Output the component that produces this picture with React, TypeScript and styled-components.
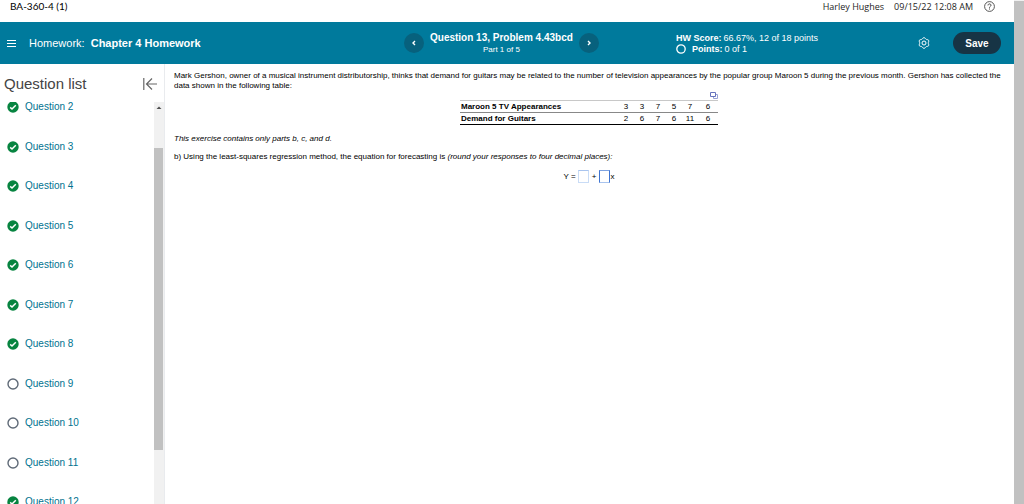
import React from 'react';
import styled, { createGlobalStyle } from 'styled-components';

const GlobalStyle = createGlobalStyle`
  *, *::before, *::after { box-sizing: border-box; }
  body {
    margin: 0;
    background: #fff;
    color: #000;
    font-family: "Liberation Sans", Arial, sans-serif;
  }
  button, input { font: inherit; }
`;

const Page = styled.div`
  display: flex;
  height: 100vh;
  overflow: hidden;
`;

const Column = styled.div`
  display: flex;
  flex: 1;
  flex-direction: column;
  min-width: 0;
`;

const PageScrollbar = styled.div`
  width: 10px;
  background: #c1c1c1;
  border-top: 1px solid #f0f0f0;
`;

const TopBar = styled.div`
  display: flex;
  align-items: center;
  height: 22px;
  padding: 0 19px 9px 10px;
  color: #252525;
  font: 9px/13px "Open Sans", sans-serif;
`;

const Course = styled.span`
  flex: 1;
  color: #000;
  font-family: Lato, sans-serif;
  font-size: 10px;
`;

const UserName = styled.span`
  margin-right: 10px;
`;

const IconButton = styled.button`
  display: flex;
  align-items: center;
  justify-content: center;
  flex: none;
  padding: 0;
  border: 0;
  background: none;
  color: inherit;
`;

const HelpButton = styled(IconButton)`
  margin-left: 11px;
`;

const Banner = styled.header`
  display: grid;
  grid-template-columns: 404fr 272fr 338fr;
  align-items: center;
  height: 42px;
  background: #007a9c;
  color: #fff;
`;

const BannerTitle = styled.div`
  display: flex;
  align-items: center;
  gap: 12px;
  padding-left: 6px;
  font-size: 11px;
  white-space: nowrap;
`;

const Assignment = styled.h1`
  margin: 0;
  font-size: 11px;
  font-weight: 400;

  strong { margin-left: 3px; }
`;

const Pager = styled.nav`
  display: flex;
  align-items: center;
  gap: 6px;
`;

const PagerButton = styled(IconButton)`
  width: 20px;
  height: 20px;
  border-radius: 50%;
  background: #07617d;
`;

const ProblemTitle = styled.div`
  text-align: center;
  font-size: 8px;
  line-height: 11px;
  white-space: nowrap;

  h2 {
    margin: 0;
    font-size: 10px;
    line-height: 12px;
  }
`;

const BannerEnd = styled.div`
  display: flex;
  align-items: center;
  padding-right: 13px;
`;

const Scores = styled.div`
  flex: 1;
  padding-top: 1px;
  font-size: 9px;
  line-height: 11px;
  white-space: nowrap;
`;

const ScoreLine = styled.div`
  display: flex;
  align-items: center;
  gap: 2px;

  svg { margin-right: 4px; }
`;

const SaveButton = styled.button`
  width: 48px;
  height: 22px;
  margin-left: 23px;
  padding: 0;
  border: 0;
  border-radius: 11px;
  background: #173445;
  color: #fff;
  font-size: 10px;
  font-weight: 700;
`;

const Body = styled.div`
  display: flex;
  flex: 1;
  min-height: 0;
`;

const Sidebar = styled.aside`
  display: flex;
  flex-direction: column;
  flex: none;
  width: 165px;
  border-right: 1px solid #e9ebee;
`;

const SidebarHead = styled.div`
  display: flex;
  align-items: center;
  justify-content: space-between;
  flex: none;
  height: 38px;
  padding: 1px 7px 0 4px;
  color: #555;

  h2 {
    margin: 0;
    color: #444;
    font-size: 15px;
    font-weight: 400;
  }
`;

const ListArea = styled.div`
  display: flex;
  flex: 1;
  min-height: 0;
  overflow: hidden;
`;

const QuestionList = styled.ul`
  display: flex;
  flex: 1;
  flex-direction: column;
  justify-content: space-between;
  margin: -1px 0 -4px;
  padding: 0 0 0 7px;
  list-style: none;
`;

const QuestionLink = styled.a`
  display: flex;
  align-items: center;
  gap: 6px;
  color: #00728f;
  font-size: 10px;
  line-height: 10px;
  text-decoration: none;
`;

const ListScrollbar = styled.div`
  display: flex;
  flex-direction: column;
  width: 10px;
  background: #f1f1f1;

  svg { flex: none; }
`;

const Thumb = styled.div`
  flex: none;
  width: 9px;
  height: 75%;
  margin-top: 36px;
  background: #c1c1c1;
`;

const Content = styled.main`
  flex: 1;
  min-width: 0;
  padding: 7px 10px 0 9px;
  font-size: 8px;
  line-height: 10px;

  p { margin: 0; }
`;

const TableFigure = styled.div`
  display: flex;
  flex-direction: column;
  align-items: flex-end;
  width: 258px;
  margin: 0 auto 9px;
`;

const DataTable = styled.table`
  width: 100%;
  border-collapse: collapse;
  border-top: 1px solid #c8c8c8;
  border-bottom: 1px solid #000;
  line-height: 11px;

  tr + tr { border-top: 1px solid #888; }
  th { padding: 0 0 0 1px; text-align: left; }
  td { width: 16px; padding: 0; text-align: center; }
  td:last-child { width: 20px; }
`;

const Note = styled.p`
  font-style: italic;
`;

const Prompt = styled.p`
  && { margin-top: 8px; }
`;

const Equation = styled.div`
  display: flex;
  align-items: center;
  justify-content: center;
  margin-top: 8px;
`;

const Answer = styled.input<{ $active?: boolean }>`
  width: 11px;
  height: 13px;
  margin: 0 0 0 2px;
  padding: 0;
  border: 1px solid;
  border-color: ${(p) => (p.$active ? '#7fa3e0 #3f74d1 #a9c4ee' : '#a9c4ee #c9dcf6 #c9dcf6')};
  border-radius: 0;
  outline: 0;
`;

const Plus = styled.span`
  margin: 0 1px 0 3px;
`;

const questions: { n: number; done: boolean }[] = [2, 3, 4, 5, 6, 7, 8, 9, 10, 11, 12].map((n) => ({
  n,
  done: n < 9 || n > 11,
}));

const rows = [
  { label: 'Maroon 5 TV Appearances', values: [3, 3, 7, 5, 7, 6] },
  { label: 'Demand for Guitars', values: [2, 6, 7, 6, 11, 6] },
];

const Status = ({ done }: { done: boolean }) => (
  <svg width="12" height="12" viewBox="0 0 12 12" role="img" aria-label={done ? 'Complete' : 'Not started'}>
    {done ? (
      <>
        <circle cx="6" cy="6" r="5.7" fill="#078440" />
        <path d="M3.2 6.4 5 8 8.8 4.2" fill="none" stroke="#fff" strokeWidth="1.5" />
      </>
    ) : (
      <circle cx="6" cy="6" r="5" fill="#fff" stroke="#5f6a77" strokeWidth="1.4" />
    )}
  </svg>
);

const Chevron = ({ d }: { d: string }) => (
  <svg width="8" height="8" viewBox="0 0 8 8" fill="none" stroke="#fff" strokeWidth="1.4">
    <path d={d} />
  </svg>
);

const gear = Array.from({ length: 48 }, (_, i) => {
  const a = (i / 48) * Math.PI * 2 - Math.PI / 2;
  const r = 4.8 + 0.55 * Math.cos(6 * (a + Math.PI / 2));
  return `${(6 + r * Math.cos(a)).toFixed(2)},${(6 + r * Math.sin(a)).toFixed(2)}`;
}).join(' ');

export default function App() {
  return (
    <Page>
      <GlobalStyle />
      <Column>
        <TopBar>
          <Course>BA-360-4 (1)</Course>
          <UserName>Harley Hughes</UserName>
          <span>09/15/22 12:08 AM</span>
          <HelpButton aria-label="Help">
            <svg width="11" height="11" viewBox="0 0 11 11" fill="none" stroke="#444">
              <circle cx="5.5" cy="5.5" r="4.9" strokeWidth="0.9" />
              <path d="M4 4.4C4 2.4 7 2.5 7 4.3 7 5.4 5.5 5.3 5.5 6.7M5.5 7.5v1" />
            </svg>
          </HelpButton>
        </TopBar>
        <Banner>
          <BannerTitle>
            <IconButton aria-label="Menu">
              <svg width="11" height="11" viewBox="0 0 11 11" stroke="#fff" strokeWidth="1">
                <path d="M1 2.5h9M1 5.5h9M1 8.5h9" />
              </svg>
            </IconButton>
            <Assignment>
              Homework: <strong>Chapter 4 Homework</strong>
            </Assignment>
          </BannerTitle>
          <Pager aria-label="Problem">
            <PagerButton aria-label="Previous">
              <Chevron d="M5 2 3 4l2 2" />
            </PagerButton>
            <ProblemTitle>
              <h2>Question 13, Problem 4.43bcd</h2>
              Part 1 of 5
            </ProblemTitle>
            <PagerButton aria-label="Next">
              <Chevron d="M3 2l2 2-2 2" />
            </PagerButton>
          </Pager>
          <BannerEnd>
            <Scores>
              <ScoreLine>
                <strong>HW Score:</strong> 66.67%, 12 of 18 points
              </ScoreLine>
              <ScoreLine>
                <svg width="10" height="10" viewBox="0 0 10 10" fill="none" stroke="#fff" strokeWidth="1.3">
                  <circle cx="5" cy="5" r="4.2" />
                </svg>
                <strong>Points:</strong> 0 of 1
              </ScoreLine>
            </Scores>
            <IconButton aria-label="Settings">
              <svg width="12" height="12" viewBox="0 0 12 12" fill="none" stroke="#fff">
                <polygon points={gear} />
                <circle cx="6" cy="6" r="2" />
              </svg>
            </IconButton>
            <SaveButton>Save</SaveButton>
          </BannerEnd>
        </Banner>
        <Body>
          <Sidebar>
            <SidebarHead>
              <h2>Question list</h2>
              <IconButton aria-label="Collapse list">
                <svg width="14" height="14" viewBox="0 0 14 14" fill="none" stroke="#666" strokeWidth="1.2">
                  <path d="M.8 1v12M14 7H3.5M9 1.5 3.5 7 9 12.5" />
                </svg>
              </IconButton>
            </SidebarHead>
            <ListArea>
              <QuestionList>
                {questions.map((q) => (
                  <li key={q.n}>
                    <QuestionLink href={`#question-${q.n}`}>
                      <Status done={q.done} />
                      Question {q.n}
                    </QuestionLink>
                  </li>
                ))}
              </QuestionList>
              <ListScrollbar aria-hidden="true">
                <svg width="10" height="10" viewBox="0 0 10 10">
                  <path d="M2.5 7 5 4.5 7.5 7z" fill="#505050" />
                </svg>
                <Thumb />
              </ListScrollbar>
            </ListArea>
          </Sidebar>
          <Content>
            <p>
              Mark Gershon, owner of a musical instrument distributorship, thinks that demand for guitars may be related
              to the number of television appearances by the popular group Maroon 5 during the previous month. Gershon
              has collected the data shown in the following table:
            </p>
            <TableFigure>
              <IconButton aria-label="Copy table data">
                <svg width="8" height="9" viewBox="0 0 8 9" fill="#fff" stroke="#9aa3d4">
                  <path d="M3.5 3.5h4v4h-4z" />
                  <path d="M.5 1.5h5v4h-5z" stroke="#6673bd" />
                </svg>
              </IconButton>
              <DataTable>
                <tbody>
                  {rows.map((row) => (
                    <tr key={row.label}>
                      <th scope="row">{row.label}</th>
                      {row.values.map((v, i) => (
                        <td key={i}>{v}</td>
                      ))}
                    </tr>
                  ))}
                </tbody>
              </DataTable>
            </TableFigure>
            <Note>This exercise contains only parts b, c, and d.</Note>
            <Prompt>
              b) Using the least-squares regression method, the equation for forecasting is{' '}
              <em>(round your responses to four decimal places):</em>
            </Prompt>
            <Equation>
              Y =<Answer aria-label="Intercept" />
              <Plus>+</Plus>
              <Answer aria-label="Slope" $active />x
            </Equation>
          </Content>
        </Body>
      </Column>
      <PageScrollbar aria-hidden="true" />
    </Page>
  );
}
